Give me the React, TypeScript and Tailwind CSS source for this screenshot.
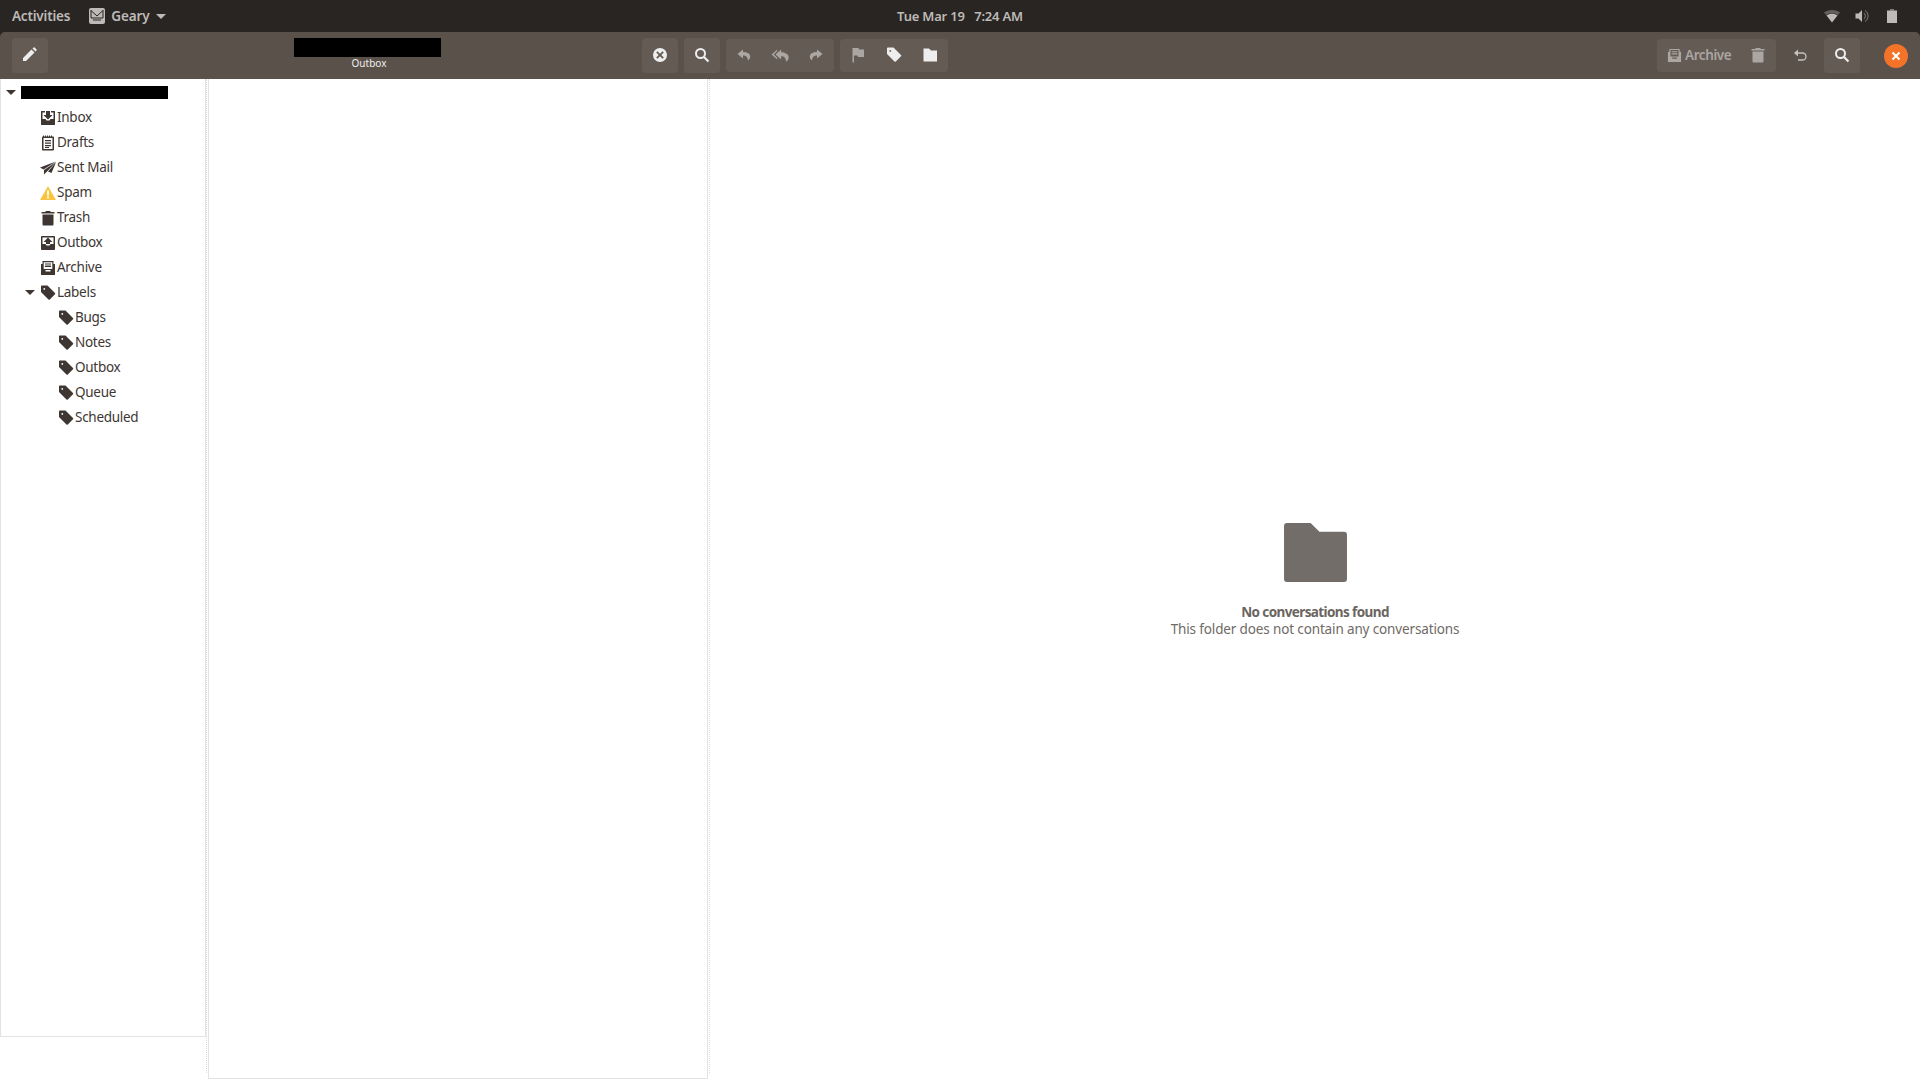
import React from "react";

const F = ({ children, size = 16, color = "currentColor", className = "" }: { children: React.ReactNode; size?: number; color?: string; className?: string }) => (
  <svg width={size} height={size} viewBox="0 0 16 16" fill={color} className={`shrink-0 ${className}`}>{children}</svg>
);

const Search = () => (
  <F>
    <circle cx="6.5" cy="6.5" r="4.5" fill="none" stroke="currentColor" strokeWidth="2" />
    <path d="M10 10l4.500 4.500" stroke="currentColor" strokeWidth="2.200" fill="none" />
  </F>
);
const Tag = ({ size = 16 }: { size?: number }) => (
  <F size={size}><path fillRule="evenodd" d="M1 1.500C1 .9 1.400 .5 2 .5H7.500L15 8C15.400 8.400 15.400 8.900 15 9.300L9.800 14.500C9.400 14.900 8.900 14.900 8.500 14.500L1 7ZM4.300 3a.9.9 0 1 0 0 1.800.9.9 0 0 0 0-1.800Z" /></F>
);
const Inbox = () => (
  <F><path fillRule="evenodd" d="M1 1.500C1 1.200 1.200 1 1.500 1H5V2.500H2.500V9H5.500L6.500 10.500H9.500L10.500 9H13.500V2.500H11V1H14.500C14.800 1 15 1.200 15 1.500V14.500C15 14.800 14.800 15 14.500 15H1.500C1.200 15 1 14.800 1 14.500Z" /><path d="M6 1H10V5H12.500L8 9.500 3.500 5H6Z" /></F>
);
const Outbox = () => (
  <F><path fillRule="evenodd" d="M1 2C1 1.400 1.400 1 2 1H14C14.600 1 15 1.400 15 2V14C15 14.600 14.600 15 14 15H2C1.400 15 1 14.600 1 14ZM2.500 2.500V9H5.500L6.500 10.500H9.500L10.500 9H13.500V2.500ZM8 2.500L12.500 7H10V9H6V7H3.500Z" /></F>
);
const Drafts = () => (
  <F><path fillRule="evenodd" d="M2 2.500C2 2 2.500 1.500 3 1.500V0.500H4V1.500H5V0.500H6V1.500H7V0.500H8V1.500H9V0.500H10V1.500H11V0.500H12V1.500H13C13.500 1.500 14 2 14 2.500V14.500C14 15 13.500 15.500 13 15.500H3C2.500 15.500 2 15 2 14.500ZM3.500 3V14H12.500V3ZM5 5H11V6.200H5ZM5 7.500H11V8.700H5ZM5 10H11V11.200H5ZM5 12H9V13H5Z" /></F>
);
const Sent = () => (
  <F><path d="M0 7.500L16 1.500 3.500 9.500 0 7.500ZM4 10L16 2 7.500 11 4 14.500ZM8 11.500L16 2.200 11.500 13Z" /></F>
);
const Warn = () => (
  <F color="#f9c440"><path fillRule="evenodd" d="M8 1L16 15H0ZM7.100 5.500V10.500H8.900V5.500ZM7.100 11.500V13.300H8.900V11.500Z" /></F>
);
const Trash = () => (
  <F><path d="M5.500 1H10.500V2H14.500V3.500H1.500V2H5.500ZM2.500 4.500H13.500V14.500C13.500 15 13 15.500 12.500 15.500H3.500C3 15.500 2.500 15 2.500 14.500Z" /></F>
);
const ArchiveIc = ({ size = 16 }: { size?: number }) => (
  <F size={size}><path fillRule="evenodd" d="M2.500 1H13.500V4H15V15H1V4H2.500ZM3.700 2.200V9H12.300V2.200ZM5 3.500H11V4.500H5ZM5 5.500H11V7H5ZM5.500 10V11.500H10.500V10Z" /></F>
);
const Caret = ({ className = "" }: { className?: string }) => (
  <svg width="10" height="5" viewBox="0 0 10 5" fill="currentColor" className={`shrink-0 ${className}`}><path d="M0 0H10L5 5Z" /></svg>
);
const Reply = () => <F><path d="M7 2.500L1.500 7 7 11.500V8.500C10 8.500 11.500 9.500 12 13.500 14 12 14.500 10.500 14 8.500 13.500 6.500 11 5 7 5Z" /></F>;
const ReplyAll = () => <F size={18}><path d="M9 3L4 7.500 9 12V9C11.500 9 13 10 13.500 14 15.500 12.500 16 11 15.500 9 15 7 12.500 5.500 9 5.500ZM5.500 3L.5 7.500 5.500 12V10.500L2.500 7.500 5.500 4.500Z" /></F>;
const Forward = () => <F><path d="M9 2.500L14.500 7 9 11.500V8.500C6 8.500 4.500 9.500 4 13.500 2 12 1.500 10.500 2 8.500 2.500 6.500 5 5 9 5Z" /></F>;

const Btn = ({ children, className = "" }: { children: React.ReactNode; className?: string }) => (
  <div className={`w-9 h-[35px] pb-px rounded-[4px] bg-[#645b55] flex items-center justify-center text-[#eeeeee] ${className}`}>{children}</div>
);
const Group = ({ children, className = "" }: { children: React.ReactNode; className?: string }) => (
  <div className={`h-[33px] rounded-[4px] bg-[#645b55] flex items-center text-[#aba6a2] ${className}`}>{children}</div>
);
const Slot = ({ children, className = "" }: { children: React.ReactNode; className?: string }) => (
  <div className={`w-9 flex items-center justify-center ${className}`}>{children}</div>
);

const Row = ({ icon, label, indent }: { icon: React.ReactNode; label: string; indent: string }) => (
  <div className={`h-[25px] flex items-center gap-px ${indent}`}>
    {icon}
    <span className="text-[13.5px] leading-none tracking-[-0.28px]">{label}</span>
  </div>
);

const Sep = ({ className = "" }: { className?: string }) => (
  <div className={`h-[994px] shrink-0 border-l border-dotted border-[#dcdcdc] ${className}`} />
);

export default function App() {
  return (
    <div className="w-[1920px] h-[1080px] overflow-hidden flex flex-col bg-[#292522] font-['Noto_Sans',sans-serif]">
      <div className="h-8 shrink-0 flex items-center justify-between pl-3 pr-[19px] text-[13.5px] font-semibold text-[#bdbab7] relative">
        <div className="flex items-center">
          <span className="tracking-[-0.2px]">Activities</span>
          <div className="w-4 h-4 ml-[19px] bg-[#bdbab7] rounded-[2px] flex items-center justify-center text-[#292522]">
            <svg width="16" height="16" viewBox="0 0 16 16" fill="none" stroke="currentColor"><path d="M2 2.500L8 8l6-5.500M2 2V10H14V2M4 12H12" /></svg>
          </div>
          <span className="ml-[6px] tracking-[-0.1px]">Geary</span>
          <Caret className="ml-1.5" />
        </div>
        <span className="absolute left-1/2 top-[7px] -translate-x-1/2 whitespace-pre text-[13px] leading-[18px] tracking-[-0.2px]">Tue Mar 19   7:24 AM</span>
        <div className="flex items-center gap-[14px] pr-[1px]">
          <F><path d="M0 4.500C4 1 12 1 16 4.500L14 7C10.500 4.500 5.500 4.500 2 7Z" opacity="0.4" /><path d="M2.500 7.500C5.500 5 10.500 5 13.500 7.500L8 14.500Z" /></F>
          <F><path d="M1.500 5.500H4.500L8 2V14L4.500 10.500H1.500Z" /><path d="M10 5A4 4 0 0 1 10 11M11 2.500A6.500 6.500 0 0 1 11 13.500" fill="none" stroke="currentColor" strokeWidth="1" opacity="0.6" /></F>
          <F><path d="M6 1H10V2.500H6Z" opacity="0.6" /><path d="M3 2.500H13V15H3Z" /></F>
        </div>
      </div>

      <div className="h-[47px] shrink-0 bg-[#5b514b] rounded-t-[5px] flex items-center pl-3 pr-3 text-[#eeeeee]">
        <Btn className="pr-[2px]">
          <F><path d="M10.500 2.500L13.500 5.500 5 14H2V11ZM11.500 1.500L12.700 .4C13 .2 13.300 .2 13.600 .4L15.600 2.400C15.800 2.700 15.800 3 15.600 3.300L14.500 4.500Z" /></F>
        </Btn>
        <div className="ml-[246px] w-[147px] flex flex-col items-center mb-[4px]">
          <div className="w-[147px] h-[19px] bg-black" />
          <span className="text-[10px] leading-[12px] ml-[3px] text-[#f0efee]">Outbox</span>
        </div>
        <Btn className="ml-[201px]">
          <F><path fillRule="evenodd" d="M8 1a7 7 0 1 0 0 14A7 7 0 0 0 8 1ZM5.500 4.200L8 6.700 10.500 4.200 11.800 5.500 9.300 8 11.800 10.500 10.500 11.800 8 9.300 5.500 11.800 4.200 10.500 6.700 8 4.200 5.500Z" /></F>
        </Btn>
        <Btn className="ml-1.5"><Search /></Btn>
        <Group className="ml-1.5 w-[108px] pb-px">
          <Slot><Reply /></Slot>
          <Slot><ReplyAll /></Slot>
          <Slot><Forward /></Slot>
        </Group>
        <Group className="ml-1.5 w-[108px] pb-px">
          <Slot><F><path d="M2.500 1H8.500L9 2.500H14V10H8L7.500 8.500H4V15.500H2.500Z" /></F></Slot>
          <Slot className="text-[#eeeeee]"><Tag /></Slot>
          <Slot className="text-[#eeeeee]"><F><path d="M1.500 1.500H7L9 3.500H15V14.500H1.500Z" /></F></Slot>
        </Group>
        <Group className="ml-[709px] w-[119px] pl-2.5 pb-px">
          <ArchiveIc size={15} />
          <span className="ml-[3px] text-[13.5px] font-semibold tracking-[-0.4px]">Archive</span>
          <div className="ml-auto w-9 flex justify-center"><Trash /></div>
        </Group>
        <div className="ml-4 w-4 text-[#c5c2bf] pb-px">
          <F><path d="M3 6H10.500A3.500 3.500 0 0 1 10.500 13H6" fill="none" stroke="currentColor" strokeWidth="1.300" /><path d="M6 2.500V9.500L2 6Z" /></F>
        </div>
        <Btn className="ml-4"><Search /></Btn>
        <div className="ml-auto w-6 h-6 rounded-full bg-[#f37329] flex items-center justify-center">
          <svg width="10" height="10" viewBox="0 0 10 10"><path d="M1.500 1.500L8.500 8.500M8.500 1.500L1.500 8.500" stroke="#fff" strokeWidth="2" /></svg>
        </div>
      </div>

      <div className="flex-1 flex bg-white min-h-0 text-[#3d3632]">
        <div className="w-[206px] shrink-0 flex flex-col">
          <div className="h-[958px] border-l border-r border-b border-[#e3e3e3]">
            <div className="h-[26px] flex items-center pl-[5px] pt-[1px]">
              <Caret />
              <div className="ml-[5px] w-[147px] h-[13px] bg-black" />
            </div>
            <Row indent="pl-[39px]" icon={<Inbox />} label="Inbox" />
            <Row indent="pl-[39px]" icon={<Drafts />} label="Drafts" />
            <Row indent="pl-[39px]" icon={<Sent />} label="Sent Mail" />
            <Row indent="pl-[39px]" icon={<Warn />} label="Spam" />
            <Row indent="pl-[39px]" icon={<Trash />} label="Trash" />
            <Row indent="pl-[39px]" icon={<Outbox />} label="Outbox" />
            <Row indent="pl-[39px]" icon={<ArchiveIc />} label="Archive" />
            <div className="h-[25px] flex items-center gap-px pl-[24px]">
              <Caret className="mr-[4px]" />
              <Tag />
              <span className="text-[13.5px] leading-none tracking-[-0.28px]">Labels</span>
            </div>
            <Row indent="pl-[57px]" icon={<Tag />} label="Bugs" />
            <Row indent="pl-[57px]" icon={<Tag />} label="Notes" />
            <Row indent="pl-[57px]" icon={<Tag />} label="Outbox" />
            <Row indent="pl-[57px]" icon={<Tag />} label="Queue" />
            <Row indent="pl-[57px]" icon={<Tag />} label="Scheduled" />
          </div>
        </div>
        <Sep className="w-[2px]" />
        <div className="w-[500px] shrink-0 h-[1000px] border-l border-r border-b border-[#e3e3e3]" />
        <Sep className="w-[4px] ml-px" />
        <div className="flex-1 flex flex-col items-center justify-center pr-[3px] pt-[2px]">
          <svg width="63" height="59" viewBox="0 0 64 60" fill="#726d68">
            <path d="M0 3C0 1 1 0 3 0H27L36 9H61C63 9 64 10 64 12V57C64 59 63 60 61 60H3C1 60 0 59 0 57Z" />
          </svg>
          <span className="mt-[22px] text-[13.5px] leading-[17px] font-bold text-[#6b6560] tracking-[-0.6px]">No conversations found</span>
          <span className="text-[13.5px] leading-[17px] text-[#6f6a66] tracking-[-0.14px]">This folder does not contain any conversations</span>
        </div>
      </div>
    </div>
  );
}
